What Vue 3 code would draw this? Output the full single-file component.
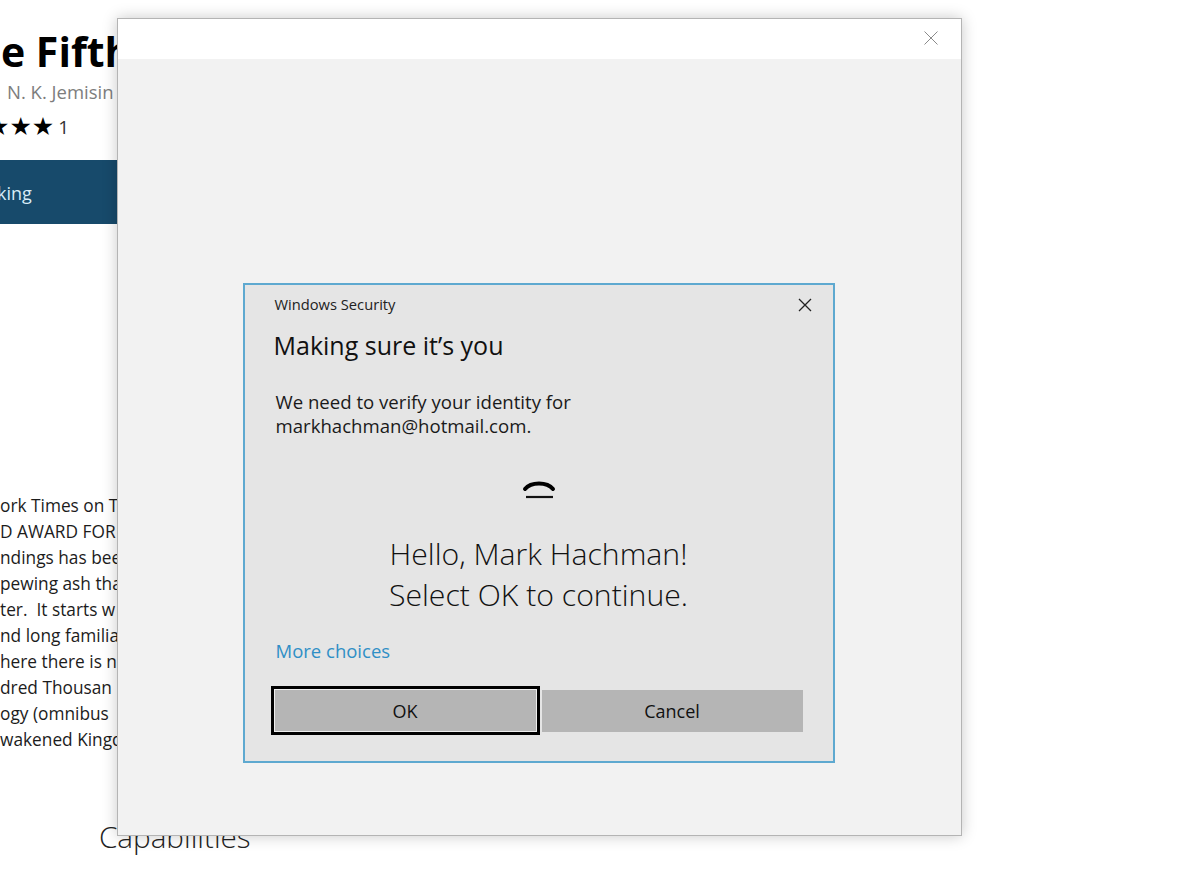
<script setup>
const lines = [
  'ork Times on T',
  'D AWARD FOR',
  'ndings has bee',
  'pewing ash tha',
  'ter.  It starts w',
  'nd long familia',
  'here there is n',
  'dred Thousan',
  'ogy (omnibus',
  'wakened Kingd'
]
</script>

<template>
  <div class="page">
    <section class="store">
      <h1 class="title">e Fifth</h1>
      <p class="author">N. K. Jemisin</p>
      <div class="rating"><span class="stars">★★★</span><span class="count">1</span></div>
      <div class="action"><span>king</span></div>
      <div class="desc">
        <div v-for="line in lines" :key="line" class="desc-line">{{ line }}</div>
      </div>
      <h2 class="capabilities">Capabilities</h2>
    </section>

    <div class="modal">
      <header class="modal-top">
        <svg class="modal-close" width="14" height="14" viewBox="0 0 14 14"><path d="M.5.5l13 13M13.5.5l-13 13" stroke="#8a8a8a" stroke-width="1" fill="none"/></svg>
      </header>
      <main class="modal-body">
        <div class="dialog">
          <div class="dialog-head">
            <span class="app-name">Windows Security</span>
            <svg class="dialog-close" width="14" height="14" viewBox="0 0 14 14"><path d="M1 1l12 12M13 1L1 13" stroke="#222" stroke-width="1.3" fill="none"/></svg>
          </div>
          <h3 class="dialog-title">Making sure it’s you</h3>
          <p class="dialog-text">We need to verify your identity for<br>markhachman@hotmail.com.</p>
          <svg class="face" width="36" height="20" viewBox="0 0 36 20">
            <path d="M4 10C10 2.5 26 2.5 32 10" stroke="#000" stroke-width="4" fill="none" stroke-linecap="round"/>
            <path d="M5 18h27" stroke="#111" stroke-width="2.2" fill="none"/>
          </svg>
          <p class="hello">Hello, Mark Hachman!<br>Select OK to continue.</p>
          <a class="more">More choices</a>
          <div class="buttons">
            <button class="btn btn-ok">OK</button>
            <button class="btn btn-cancel">Cancel</button>
          </div>
        </div>
      </main>
    </div>
  </div>
</template>

<style>
html, body { margin: 0; background: #fff; }
</style>

<style scoped>
.page {
  position: relative;
  width: 1200px;
  height: 872px;
  overflow: hidden;
  background: #fff;
  font-family: "Open Sans", "Noto Sans", sans-serif;
  color: #111;
}
.store { display: flex; flex-direction: column; align-items: flex-start; }
.title {
  margin: 24px 0 0 1px;
  font-size: 41px;
  line-height: 54px;
  font-weight: 700;
  color: #000;
  white-space: nowrap;
}
.author {
  margin: 2px 0 0 7px;
  font-size: 18.5px;
  line-height: 24px;
  color: #7d7d7d;
  white-space: nowrap;
}
.rating { margin: 11px 0 0 -13px; display: flex; align-items: center; gap: 4px; height: 24px; }
.stars { font-family: "DejaVu Sans", sans-serif; font-size: 25px; color: #000; line-height: 24px; }
.count { font-size: 19px; color: #333; line-height: 24px; }
.action {
  margin-top: 21px;
  width: 117px;
  height: 64px;
  background: #174a6b;
  color: #d8ecf7;
  font-size: 18px;
  display: flex;
  align-items: center;
}
.action span { margin: 1px 0 0 -3px; }
.desc { margin-top: 269px; width: 117px; overflow: hidden; }
.desc-line { font-size: 17.3px; line-height: 26px; white-space: pre; color: #1c1c1c; }
.capabilities {
  margin: 66px 0 0 99px;
  font-size: 29.6px;
  line-height: 36px;
  font-weight: 300;
  color: #222;
  font-family: "Open Sans", sans-serif;
}
.modal {
  position: absolute;
  left: 117px;
  top: 18px;
  width: 843px;
  height: 816px;
  display: flex;
  flex-direction: column;
  border: 1px solid #b4b4b4;
  background: #f2f2f2;
  box-shadow: 0 0 14px rgba(0, 0, 0, .22);
}
.modal-top {
  height: 40px;
  background: #fff;
  display: flex;
  justify-content: flex-end;
  align-items: center;
  padding-right: 23px;
  flex: none;
}
.modal-close { margin-top: -2px; }
.modal-body { flex: 1; display: flex; justify-content: center; padding: 224px 2px 0 0; }
.dialog {
  box-sizing: border-box;
  width: 592px;
  height: 480px;
  background: #e5e5e5;
  border: 2px solid #5ea9d0;
  padding: 0 29px;
  display: flex;
  flex-direction: column;
  color: #111;
}
.dialog-head { height: 38px; margin-bottom: 2px; display: flex; align-items: center; justify-content: space-between; padding: 0 0 0 1px; flex: none; }
.app-name { font-size: 14.7px; color: #222; }
.dialog-close { margin-right: -8px; margin-top: 2px; }
.dialog-title { margin: 0; font-size: 25px; font-weight: 400; line-height: 40px; color: #111; }
.dialog-text { margin: 25px 0 0 2px; font-size: 18.6px; line-height: 24px; color: #1a1a1a; }
.face { display: block; margin: 41px auto 0; flex: none; }
.hello { margin: 34px 0 0; font-size: 30.2px; line-height: 41px; text-align: center; font-weight: 300; color: #111; }
.more { margin: 23px 0 0 2px; font-size: 18.5px; line-height: 26px; color: #2f8fc6; }
.buttons { margin: 22px 0 0 -3px; display: flex; align-items: center; }
.btn {
  font-family: inherit;
  font-size: 18px;
  color: #111;
  border: none;
  background: #b5b5b5;
  padding: 0;
}
.btn-ok {
  box-sizing: border-box;
  width: 269px;
  height: 49px;
  outline: none;
  border: 3px solid #000;
  box-shadow: inset 0 0 0 1px #eee;
}
.btn-cancel { width: 261px; height: 42px; margin-left: 2px; }
</style>
